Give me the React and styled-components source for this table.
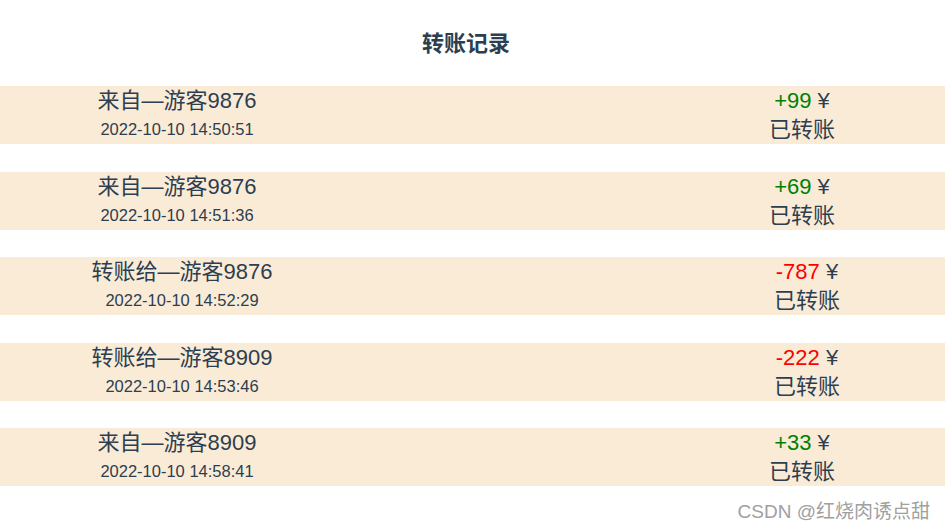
import React from 'react'
import styled, { createGlobalStyle } from 'styled-components'

const GlobalStyle = createGlobalStyle`
 body {
  margin: 0;
  background: #fff;
  font-family: 'Liberation Sans', 'Noto Sans CJK SC', sans-serif;
  color: #2c3e50;
 }
`

const records = [
 { id: 1, title: '来自—游客9876', time: '2022-10-10 14:50:51', amount: '+99', out: false },
 { id: 2, title: '来自—游客9876', time: '2022-10-10 14:51:36', amount: '+69', out: false },
 { id: 3, title: '转账给—游客9876', time: '2022-10-10 14:52:29', amount: '-787', out: true },
 { id: 4, title: '转账给—游客8909', time: '2022-10-10 14:53:46', amount: '-222', out: true },
 { id: 5, title: '来自—游客8909', time: '2022-10-10 14:58:41', amount: '+33', out: false },
]

const App = () => {
 return (
  <Page>
   <GlobalStyle />
   <Title>转账记录</Title>
   <List>
    {records.map((item) => {
     const { id, title, time, amount, out } = item
     return (
      <Row key={id} out={out}>
       <Cell>
        <Main>{title}</Main>
        <Time>{time}</Time>
       </Cell>
       <div></div>
       <Cell>
        <Main>
         <Amount out={out}>{amount}</Amount> ¥
        </Main>
        <Main>已转账</Main>
       </Cell>
      </Row>
     )
    })}
   </List>
   <Watermark>CSDN @红烧肉诱点甜</Watermark>
  </Page>
 )
}

// Styled Components

const Page = styled.div`
 position: relative;
 width: 945px;
 height: 530px;
 overflow: hidden;
`

const Title = styled.h3`
 margin: 0;
 padding: 29px 13px 27px 0;
 line-height: 30px;
 font-size: 22px;
 font-weight: bold;
 text-align: center;
`

const List = styled.div`
 display: flex;
 flex-direction: column;
 gap: 27.5px;
`

const Row = styled.div`
 display: grid;
 grid-template-columns: ${(p) => (p.out ? '364px 1fr 276px' : '354px 1fr 286px')};
 height: 58px;
 background: #faebd7;
`

const Cell = styled.div`
 display: flex;
 flex-direction: column;
 align-items: center;
`

const Main = styled.div`
 font-size: 22px;
 line-height: 30px;
 height: 29px;
 white-space: nowrap;
`

const Time = styled.div`
 font-size: 16.5px;
 line-height: 28px;
 white-space: nowrap;
`

const Amount = styled.span`
 color: ${(p) => (p.out ? '#ff0000' : '#008000')};
`

const Watermark = styled.div`
 position: absolute;
 right: 15px;
 bottom: 7px;
 font-size: 19px;
 color: #a0a0a0;
 white-space: nowrap;
`

export default App
